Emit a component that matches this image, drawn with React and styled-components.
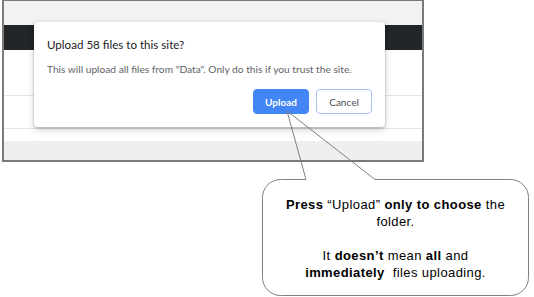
import React from "react";
import styled, { createGlobalStyle } from "styled-components";

const GlobalStyle = createGlobalStyle`
  html, body {
    margin: 0;
    padding: 0;
    background: #fff;
  }
  body {
    width: 534px;
    height: 297px;
    overflow: hidden;
  }
`;

const Page = styled.div`
  position: relative;
  width: 534px;
  height: 297px;
  display: flex;
  flex-direction: column;
`;

const Shot = styled.div`
  position: relative;
  margin-left: 2px;
  width: 418px;
  border: 2px solid #7a7a7a;
  border-top-width: 1px;
  display: flex;
  flex-direction: column;
  background: #fff;
`;

const Band = styled.div`
  height: ${(p) => p.$h}px;
  background: ${(p) => p.$bg || "#fff"};
  border-bottom: ${(p) => (p.$line ? "1px solid #e4e4e4" : "none")};
`;

const Dialog = styled.div`
  position: absolute;
  left: 30px;
  top: 21px;
  width: 351px;
  height: 105px;
  box-sizing: border-box;
  padding: 15px 13px 13px 13px;
  background: #fff;
  border-radius: 4px;
  box-shadow: 0 1px 3px rgba(0, 0, 0, 0.28), 0 3px 8px rgba(0, 0, 0, 0.14);
  display: flex;
  flex-direction: column;
  font-family: Lato, "Open Sans", sans-serif;
`;

const Title = styled.div`
  font-size: 11.6px;
  line-height: 16px;
  color: #202124;
`;

const Message = styled.div`
  margin-top: 9px;
  font-size: 10.2px;
  line-height: 14px;
  color: #5f6368;
  white-space: nowrap;
`;

const Actions = styled.div`
  margin-top: auto;
  display: flex;
  justify-content: flex-end;
  gap: 7px;
`;

const Button = styled.button`
  width: 56px;
  height: 25px;
  box-sizing: border-box;
  border-radius: 4px;
  font-family: Lato, "Open Sans", sans-serif;
  font-size: 10px;
  font-weight: ${(p) => (p.$primary ? 700 : 400)};
  color: ${(p) => (p.$primary ? "#fff" : "#4a4d52")};
  background: ${(p) => (p.$primary ? "#4285f4" : "#fff")};
  border: 1px solid ${(p) => (p.$primary ? "#4285f4" : "#a9c4f4")};
  padding: 0;
`;

const Callout = styled.div`
  margin-left: 262px;
  margin-top: 17px;
  width: 267px;
  height: 117px;
  box-sizing: border-box;
  padding-top: 17px;
  text-align: center;
  font-family: "Liberation Sans", Arial, sans-serif;
  font-size: 13px;
  line-height: 17px;
  letter-spacing: 0.4px;
  color: #000;
  white-space: pre-wrap;
`;

const Line = styled.div`
  min-height: 17px;
`;

const Strong = styled.b`
  font-weight: 700;
`;

const Outline = styled.svg`
  position: absolute;
  left: 0;
  top: 0;
  pointer-events: none;
`;

export default function App() {
  return (
    <Page>
      <GlobalStyle />
      <Shot>
        <Band $h={24} $bg="#f1f2f4" />
        <Band $h={25} $bg="#222629" />
        <Band $h={45} $line />
        <Band $h={32} $line />
        <Band $h={12} />
        <Band $h={19} $bg="#efefef" />
        <Dialog>
          <Title>Upload 58 files to this site?</Title>
          <Message>
            This will upload all files from "Data". Only do this if you trust the site.
          </Message>
          <Actions>
            <Button $primary>Upload</Button>
            <Button>Cancel</Button>
          </Actions>
        </Dialog>
      </Shot>
      <Callout>
        <Line>
          <Strong>Press</Strong> “Upload” <Strong>only to choose</Strong> the
        </Line>
        <Line>folder.</Line>
        <Line />
        <Line>
          It <Strong>doesn’t</Strong> mean <Strong>all</Strong> and
        </Line>
        <Line>
          <Strong>immediately</Strong>  files uploading.
        </Line>
      </Callout>
      <Outline width="534" height="297" viewBox="0 0 534 297">
        <path
          d="M306 179.5 L287 111 L375 179.5 H510.5 A18 18 0 0 1 528.5 197.5 V277.5 A18 18 0 0 1 510.5 295.5 H280.5 A18 18 0 0 1 262.5 277.5 V197.5 A18 18 0 0 1 280.5 179.5 Z"
          fill="none"
          stroke="#7f7f7f"
          strokeWidth="1"
        />
      </Outline>
    </Page>
  );
}
